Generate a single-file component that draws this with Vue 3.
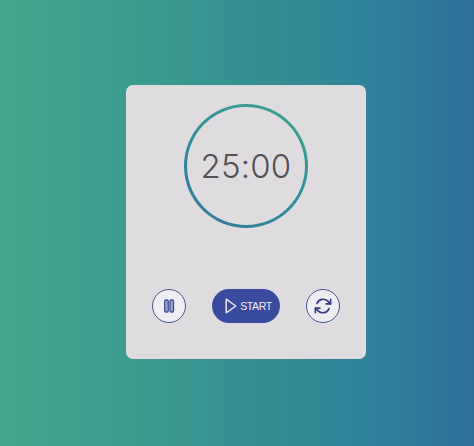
<script setup>
const label = '25:00'
</script>

<template>
  <main class="page">
    <section class="card">
      <div class="ring">
        <div class="ring-inner">{{ label }}</div>
      </div>
      <div class="controls">
        <button class="round">
          <svg width="34" height="34" viewBox="0 0 34 34" fill="#a3abd2" stroke="#3b4a94" stroke-width="1.3">
            <rect x="12.7" y="11" width="3.5" height="12" rx="1.2" />
            <rect x="18" y="11" width="3.5" height="12" rx="1.2" />
          </svg>
        </button>
        <button class="start">
          <svg width="12" height="16" viewBox="0 0 12 16" fill="none" stroke="#e6e6f2" stroke-width="1.5" stroke-linejoin="round">
            <path d="M1.2 1.2 L10.8 8 L1.2 14.8 Z" />
          </svg>
          <span>START</span>
        </button>
        <button class="round">
          <svg width="34" height="34" viewBox="0 0 34 34" fill="none" stroke="#363f85" stroke-width="1.7" stroke-linecap="round" stroke-linejoin="round">
            <path d="M11 14.4 A6.6 6.6 0 0 1 21.8 12.2 L24.4 14.8" />
            <path d="M24.6 10.4 V14.8 H20.2" />
            <path d="M23 19.6 A6.6 6.6 0 0 1 12.2 21.8 L9.6 19.2" />
            <path d="M9.4 23.6 V19.2 H13.8" />
          </svg>
        </button>
      </div>
    </section>
  </main>
</template>

<style>
html, body { margin: 0; padding: 0; }
</style>

<style scoped>
.page {
  width: 474px;
  height: 446px;
  box-sizing: border-box;
  padding-top: 85px;
  display: flex;
  justify-content: center;
  align-items: flex-start;
  overflow: hidden;
  background: linear-gradient(90deg, #44a78e 0%, #37948f 45%, #2f839a 78%, #2e7099 100%);
}
.card {
  width: 240px;
  height: 274px;
  margin-left: 18px;
  box-sizing: border-box;
  padding-top: 19px;
  background: #dfdcdf;
  border-radius: 7px;
  display: flex;
  flex-direction: column;
  align-items: center;
}
.ring {
  width: 124px;
  height: 124px;
  box-sizing: border-box;
  padding: 3px;
  border-radius: 50%;
  background: linear-gradient(35deg, #2f7a9e 10%, #35909a 50%, #3a9f90 90%);
}
.ring-inner {
  width: 100%;
  height: 100%;
  border-radius: 50%;
  background: #dfdcdf;
  display: flex;
  align-items: center;
  justify-content: center;
  font-family: Inter, "Liberation Sans", sans-serif;
  font-weight: 300;
  font-size: 33px;
  font-feature-settings: "calt" 0;
  letter-spacing: 0.2px;
  color: #535154;
}
.controls {
  width: 188px;
  margin-top: 61px;
  display: flex;
  align-items: center;
  justify-content: space-between;
}
button {
  padding: 0;
  margin: 0;
  font: inherit;
  cursor: pointer;
}
.round {
  width: 34px;
  height: 34px;
  box-sizing: border-box;
  border: 1.3px solid #4a5590;
  border-radius: 50%;
  background: #eeedf1;
  display: flex;
  align-items: center;
  justify-content: center;
}
.round svg {
  flex: none;
  margin: -1.3px;
}
.start {
  width: 68px;
  height: 34px;
  box-sizing: border-box;
  padding-left: 5px;
  border: 0;
  border-radius: 17px;
  background: #3a4a9f;
  display: flex;
  align-items: center;
  justify-content: center;
  gap: 3px;
  color: #eef0f6;
  font-family: "Liberation Sans", Arial, sans-serif;
  font-size: 10.5px;
  letter-spacing: -0.4px;
}
</style>
